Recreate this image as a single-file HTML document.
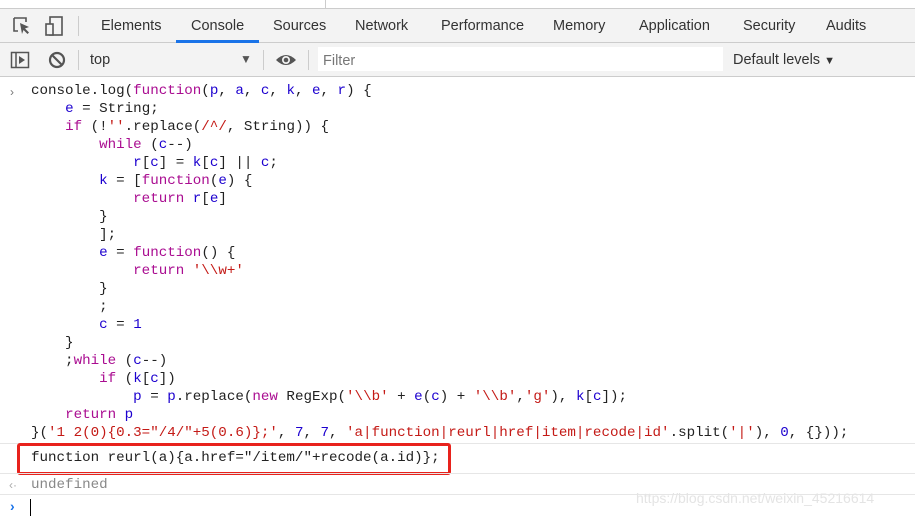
<html><head><style>
body{margin:0;width:915px;height:518px;background:#fff;position:relative;overflow:hidden;font-family:"Liberation Sans",sans-serif}
.a{position:absolute}
.tab{position:absolute;top:18px;font-size:14.5px;color:#333}
pre{margin:0;font-family:"Liberation Mono",monospace;font-size:14.2px;line-height:18px;color:#222}
.k{color:#aa0d91}.v{color:#1c00cf}.s{color:#c41a16}.n{color:#1c00cf}
</style></head><body>
<div class="a" style="left:0;top:0;width:915px;height:8px;background:#fff;border-bottom:1px solid #ccc"></div>
<div class="a" style="left:325px;top:0;width:1px;height:8px;background:#ccc"></div>
<div class="a" style="left:0;top:9px;width:915px;height:33px;background:#f3f3f3;border-bottom:1px solid #ccc"></div>
<svg class="a" style="left:11px;top:15px" width="22" height="22" viewBox="0 0 22 22"><path d="M3 3h12v4M3 3v13h4" fill="none" stroke="#555" stroke-width="1.6"/><path d="M9 8l9 4-4 1.5 4 4-1.5 1.5-4-4-1.5 4z" fill="#555"/></svg>
<svg class="a" style="left:44px;top:15px" width="22" height="22" viewBox="0 0 22 22"><rect x="6" y="2" width="12" height="18" fill="none" stroke="#555" stroke-width="1.6"/><rect x="2" y="9" width="7" height="11" fill="#f3f3f3" stroke="#555" stroke-width="1.6"/></svg>
<div class="a" style="left:78px;top:16px;width:1px;height:20px;background:#ccc"></div>
<div class="tab" style="left:101px">Elements</div>
<div class="tab" style="left:191px">Console</div>
<div class="a" style="left:176px;top:40px;width:83px;height:3px;background:#1a73e8"></div>
<div class="tab" style="left:273px">Sources</div>
<div class="tab" style="left:355px">Network</div>
<div class="tab" style="left:441px">Performance</div>
<div class="tab" style="left:553px">Memory</div>
<div class="tab" style="left:639px">Application</div>
<div class="tab" style="left:743px">Security</div>
<div class="tab" style="left:826px">Audits</div>
<div class="a" style="left:0;top:43px;width:915px;height:33px;background:#f3f3f3;border-bottom:1px solid #ccc"></div>
<svg class="a" style="left:10px;top:50px" width="20" height="20" viewBox="0 0 20 20"><rect x="1.5" y="2.5" width="17" height="15" fill="none" stroke="#555" stroke-width="1.5"/><path d="M6 3v14" stroke="#555" stroke-width="1.5"/><path d="M9 6l6 4-6 4z" fill="#555"/></svg>
<svg class="a" style="left:47px;top:50px" width="20" height="20" viewBox="0 0 20 20"><circle cx="10" cy="10" r="7" fill="none" stroke="#555" stroke-width="2.2"/><path d="M5 5l10 10" stroke="#555" stroke-width="2.2"/></svg>
<div class="a" style="left:78px;top:50px;width:1px;height:20px;background:#ccc"></div>
<div class="a" style="left:90px;top:52px;font-size:14.5px;color:#333">top</div>
<div class="a" style="left:240px;top:52px;font-size:12px;color:#555">▼</div>
<div class="a" style="left:263px;top:50px;width:1px;height:20px;background:#ccc"></div>
<svg class="a" style="left:275px;top:50px" width="22" height="20" viewBox="0 0 22 20"><path d="M1 10Q11 0 21 10Q11 20 1 10z" fill="#555"/><circle cx="11" cy="10" r="4" fill="#f3f3f3"/><circle cx="11" cy="10" r="2.3" fill="#555"/></svg>
<div class="a" style="left:308px;top:50px;width:1px;height:20px;background:#ccc"></div>
<div class="a" style="left:318px;top:47px;width:405px;height:24px;background:#fff"></div>
<div class="a" style="left:323px;top:53px;font-size:14.5px;color:#777">Filter</div>
<div class="a" style="left:733px;top:52px;font-size:14.5px;color:#333">Default levels <span style="font-size:11px">▼</span></div>
<div class="a" style="left:10px;top:85px;font-size:12px;color:#777">›</div>
<pre class="a" style="left:31px;top:82px">console.log(<span class="k">function</span>(<span class="v">p</span>, <span class="v">a</span>, <span class="v">c</span>, <span class="v">k</span>, <span class="v">e</span>, <span class="v">r</span>) {
    <span class="v">e</span> = String;
    <span class="k">if</span> (!<span class="s">''</span>.replace(<span class="s">/^/</span>, String)) {
        <span class="k">while</span> (<span class="v">c</span>--)
            <span class="v">r</span>[<span class="v">c</span>] = <span class="v">k</span>[<span class="v">c</span>] || <span class="v">c</span>;
        <span class="v">k</span> = [<span class="k">function</span>(<span class="v">e</span>) {
            <span class="k">return</span> <span class="v">r</span>[<span class="v">e</span>]
        }
        ];
        <span class="v">e</span> = <span class="k">function</span>() {
            <span class="k">return</span> <span class="s">'\\w+'</span>
        }
        ;
        <span class="v">c</span> = <span class="n">1</span>
    }
    ;<span class="k">while</span> (<span class="v">c</span>--)
        <span class="k">if</span> (<span class="v">k</span>[<span class="v">c</span>])
            <span class="v">p</span> = <span class="v">p</span>.replace(<span class="k">new</span> RegExp(<span class="s">'\\b'</span> + <span class="v">e</span>(<span class="v">c</span>) + <span class="s">'\\b'</span>,<span class="s">'g'</span>), <span class="v">k</span>[<span class="v">c</span>]);
    <span class="k">return</span> <span class="v">p</span>
}(<span class="s">'1 2(0){0.3="/4/"+5(0.6)};'</span>, <span class="n">7</span>, <span class="n">7</span>, <span class="s">'a|function|reurl|href|item|recode|id'</span>.split(<span class="s">'|'</span>), <span class="n">0</span>, {}));</pre>
<div class="a" style="left:0;top:443px;width:915px;height:1px;background:#e6e6e6"></div>
<pre class="a" style="left:31px;top:449px">function reurl(a){a.href="/item/"+recode(a.id)};</pre>
<div class="a" style="left:17px;top:443px;width:428px;height:26px;border:3px solid #e8221c;border-radius:3px"></div>
<div class="a" style="left:0;top:473px;width:915px;height:1px;background:#e6e6e6"></div>
<div class="a" style="left:9px;top:478px;font-size:12px;color:#aaa">‹·</div>
<pre class="a" style="left:31px;top:476px;color:#888">undefined</pre>
<div class="a" style="left:0;top:494px;width:915px;height:1px;background:#e6e6e6"></div>
<div class="a" style="left:10px;top:498px;font-size:14px;color:#1a73e8;font-weight:bold">›</div>
<div class="a" style="left:30px;top:499px;width:1px;height:17px;background:#000"></div>
<div class="a" style="left:636px;top:490px;font-size:14px;color:#e4e4e4">https://blog.csdn.net/weixin_45216614</div>
</body></html>
